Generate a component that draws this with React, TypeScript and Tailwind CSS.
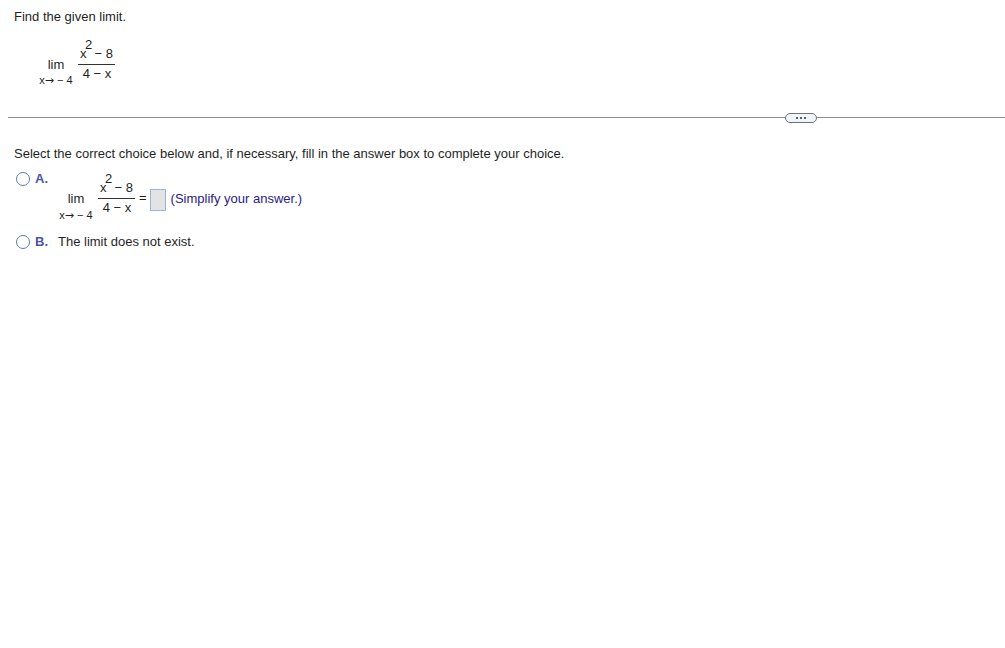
import React from "react";

function Limit({ gap }: { gap: "mt-[3px]" | "mt-[4px]" }) {
  return (
    <div className="flex flex-col items-center w-[38px]">
      <div className="h-[14px] leading-[14px]">lim</div>
      <div className={`h-[11px] ${gap} leading-[11px] text-[11px] whitespace-nowrap`}>
        x<span className="font-['DejaVu_Sans',sans-serif]">→</span> − 4
      </div>
    </div>
  );
}

function Fraction() {
  return (
    <div className="flex flex-col items-center w-[37px]">
      <div className="h-[19px] flex items-end pb-[3px] leading-[13px] whitespace-nowrap">
        <span className="relative">
          x
          <span className="absolute left-[5px] top-[-9px]">2</span>
        </span>
        <span className="ml-[8px]">− 8</span>
      </div>
      <div className="w-full h-px bg-[#333] mt-[1px]" />
      <div className="leading-[14px] mt-[2px] pl-[1px] whitespace-nowrap">4 − x</div>
    </div>
  );
}

function Radio() {
  return <div className="w-[14px] h-[14px] rounded-full border-[1.5px] border-[#5b7fa8] bg-white shrink-0" />;
}

export default function App() {
  return (
    <div className="w-[1005px] h-[648px] bg-white text-[#1f1f1f] text-[13px] font-['Liberation_Sans',Arial,sans-serif] overflow-hidden">
      <div className="pl-[14px] pt-[10px] leading-[14px]">Find the given limit.</div>

      <div className="flex items-start pl-[37px] mt-[20px]">
        <div className="mt-[14px]">
          <Limit gap="mt-[3px]" />
        </div>
        <div className="ml-[3px]">
          <Fraction />
        </div>
      </div>

      <div className="flex items-center pl-[8px] mt-[27px] h-[9px]">
        <div className="w-[777px] h-px bg-[#8a8f98]" />
        <div className="w-[32px] h-[10px] rounded-full border border-[#69727f] bg-[#f1f5fa] flex items-center justify-center gap-[2px] shrink-0">
          <span className="w-[2px] h-[2px] bg-[#55606e]" />
          <span className="w-[2px] h-[2px] bg-[#55606e]" />
          <span className="w-[2px] h-[2px] bg-[#55606e]" />
        </div>
        <div className="flex-1 h-px bg-[#8a8f98]" />
      </div>

      <div className="pl-[14px] mt-[25px] leading-[14px]">
        Select the correct choice below and, if necessary, fill in the answer box to complete your choice.
      </div>

      <div className="flex items-center pl-[16px] mt-[11px] h-[14px]">
        <Radio />
        <span className="ml-[5px] font-bold text-[#4a55a8]">A.</span>
      </div>

      <div className="flex items-start pl-[57px] mt-[-8px]">
        <div className="mt-[14px]">
          <Limit gap="mt-[4px]" />
        </div>
        <div className="ml-[3px]">
          <Fraction />
        </div>
        <span className="ml-[4px] mt-[13px] leading-[14px]">=</span>
        <div className="ml-[3px] mt-[11px] w-[16px] h-[22px] bg-[#e3e3e3] border border-[#9db4d8]" />
        <span className="ml-[5px] mt-[14px] leading-[14px] text-[#2a1a8a]">(Simplify your answer.)</span>
      </div>

      <div className="flex items-center pl-[16px] mt-[14px] h-[14px]">
        <Radio />
        <span className="ml-[5px] font-bold text-[#4a55a8]">B.</span>
        <span className="ml-[10px] text-[#1f1f1f]">The limit does not exist.</span>
      </div>
    </div>
  );
}
